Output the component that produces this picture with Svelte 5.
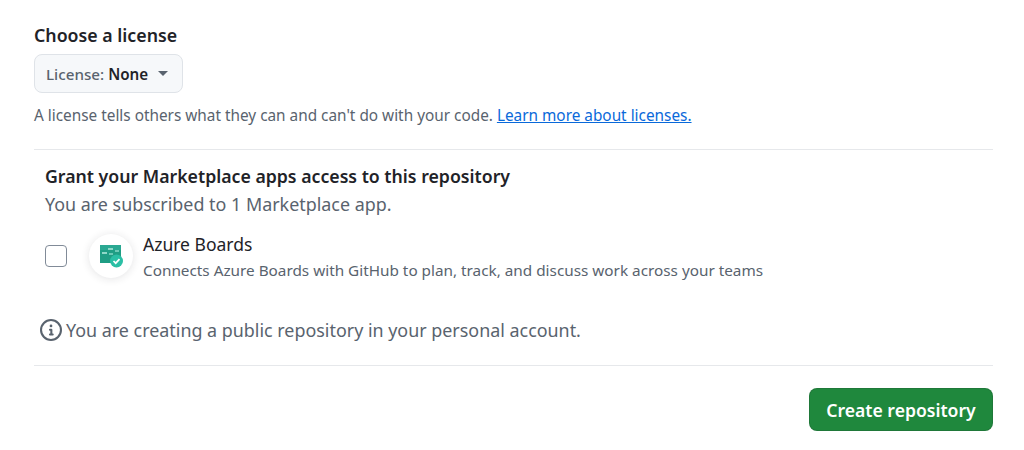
<script>
    let licenseName = 'None';
</script>

<main class="page">
    <section class="license">
        <h3 class="label">Choose a license</h3>
        <button class="select" type="button">
            <span class="muted">License:</span> <span class="value">{licenseName}</span>
            <span class="caret"></span>
        </button>
        <p class="note">A license tells others what they can and can't do with your code. <a href="#licenses">Learn more about licenses.</a></p>
    </section>

    <section class="apps">
        <h3 class="apps-title">Grant your Marketplace apps access to this repository</h3>
        <p class="apps-sub">You are subscribed to 1 Marketplace app.</p>
        <div class="app-row">
            <input class="check" type="checkbox" />
            <div class="avatar">
                <svg width="24" height="23" viewBox="0 0 24 23">
                    <rect x="1" y="0" width="21" height="18" fill="#1f9d84" />
                    <rect x="1" y="0" width="21" height="5" fill="#2aa892" />
                    <rect x="3" y="7" width="5" height="2" fill="#8fd8c8" />
                    <rect x="9" y="3" width="5" height="2" fill="#8fd8c8" />
                    <rect x="16" y="5" width="4" height="2" fill="#6cc9b6" />
                    <rect x="10" y="8" width="4" height="2" fill="#6cc9b6" />
                    <circle cx="17.5" cy="16" r="6.5" fill="#2bbfa5" />
                    <path d="M14.5 16l2.2 2.2 3.8-4" fill="none" stroke="#fff" stroke-width="1.7" />
                </svg>
            </div>
            <div class="app-text">
                <div class="app-name">Azure Boards</div>
                <div class="app-desc">Connects Azure Boards with GitHub to plan, track, and discuss work across your teams</div>
            </div>
        </div>
    </section>

    <div class="info">
        <svg width="22" height="22" viewBox="0 0 16 16" fill="#59636e">
            <path d="M0 8a8 8 0 1 1 16 0A8 8 0 0 1 0 8Zm8-6.5a6.5 6.5 0 1 0 0 13 6.5 6.5 0 0 0 0-13ZM6.5 7.75A.75.75 0 0 1 7.25 7h1a.75.75 0 0 1 .75.75v2.75h.25a.75.75 0 0 1 0 1.5h-2a.75.75 0 0 1 0-1.5h.25v-2h-.25a.75.75 0 0 1-.75-.75ZM8 6a1 1 0 1 1 0-2 1 1 0 0 1 0 2Z" />
        </svg>
        <span>You are creating a public repository in your personal account.</span>
    </div>

    <footer class="actions">
        <button class="create" type="button">Create repository</button>
    </footer>
</main>

<style>
    :global(body) {
        margin: 0;
        background: #fff;
        font-family: "Noto Sans", "Open Sans", sans-serif;
        color: #1f2328;
    }

    .page {
        width: 959px;
        margin-left: 34px;
        padding-top: 24px;
    }

    h3, p {
        margin: 0;
    }

    .license {
        padding-bottom: 24px;
        border-bottom: 1px solid #e6e8eb;
    }

    .label {
        font-size: 17.75px;
        line-height: 22px;
        font-weight: 600;
    }

    .select {
        display: flex;
        align-items: center;
        gap: 4px;
        height: 39px;
        width: 149px;
        margin-top: 8px;
        padding: 0 11px;
        background: #f6f8fa;
        border: 1px solid #dfe3e8;
        border-radius: 8px;
        font: inherit;
        font-size: 15.2px;
        white-space: nowrap;
    }

    .muted {
        color: #59636e;
        font-weight: 500;
    }

    .value {
        font-weight: 600;
        color: #1f2328;
    }

    .caret {
        margin-left: 6px;
        border: 5px solid transparent;
        border-top-color: #59636e;
        border-bottom-width: 0;
    }

    .note {
        margin-top: 12px;
        font-size: 15.35px;
        line-height: 20px;
        color: #59636e;
    }

    .note a {
        color: #0969da;
    }

    .apps {
        padding: 14px 11px 0;
    }

    .apps-title {
        font-size: 17.7px;
        line-height: 24px;
        font-weight: 600;
    }

    .apps-sub {
        margin-top: 4px;
        font-size: 17.9px;
        line-height: 24px;
        color: #59636e;
    }

    .app-row {
        display: flex;
        align-items: center;
        margin-top: 16px;
    }

    .check {
        appearance: none;
        width: 22px;
        height: 22px;
        margin: 0 22px 0 0;
        background: #fff;
        border: 1px solid #818b98;
        border-radius: 4px;
    }

    .avatar {
        display: flex;
        align-items: center;
        justify-content: center;
        width: 44px;
        height: 44px;
        margin-right: 10px;
        border-radius: 50%;
        background: #fff;
        box-shadow: 0 1px 8px rgba(31, 35, 40, 0.12);
    }

    .app-name {
        font-size: 17.5px;
        line-height: 24px;
    }

    .app-desc {
        margin-top: 4px;
        font-size: 15.3px;
        line-height: 20px;
        color: #59636e;
    }

    .info {
        display: flex;
        align-items: center;
        gap: 4px;
        margin: 38px 0 0 6px;
        font-size: 17.9px;
        line-height: 24px;
        color: #59636e;
    }

    .actions {
        display: flex;
        justify-content: flex-end;
        margin-top: 23px;
        padding-top: 22px;
        border-top: 1px solid #e6e8eb;
    }

    .create {
        height: 43px;
        width: 184px;
        background: #1f883d;
        color: #fff;
        border: 1px solid rgba(31, 35, 40, 0.15);
        border-radius: 8px;
        font: inherit;
        font-size: 17.6px;
        font-weight: 600;
    }
</style>
